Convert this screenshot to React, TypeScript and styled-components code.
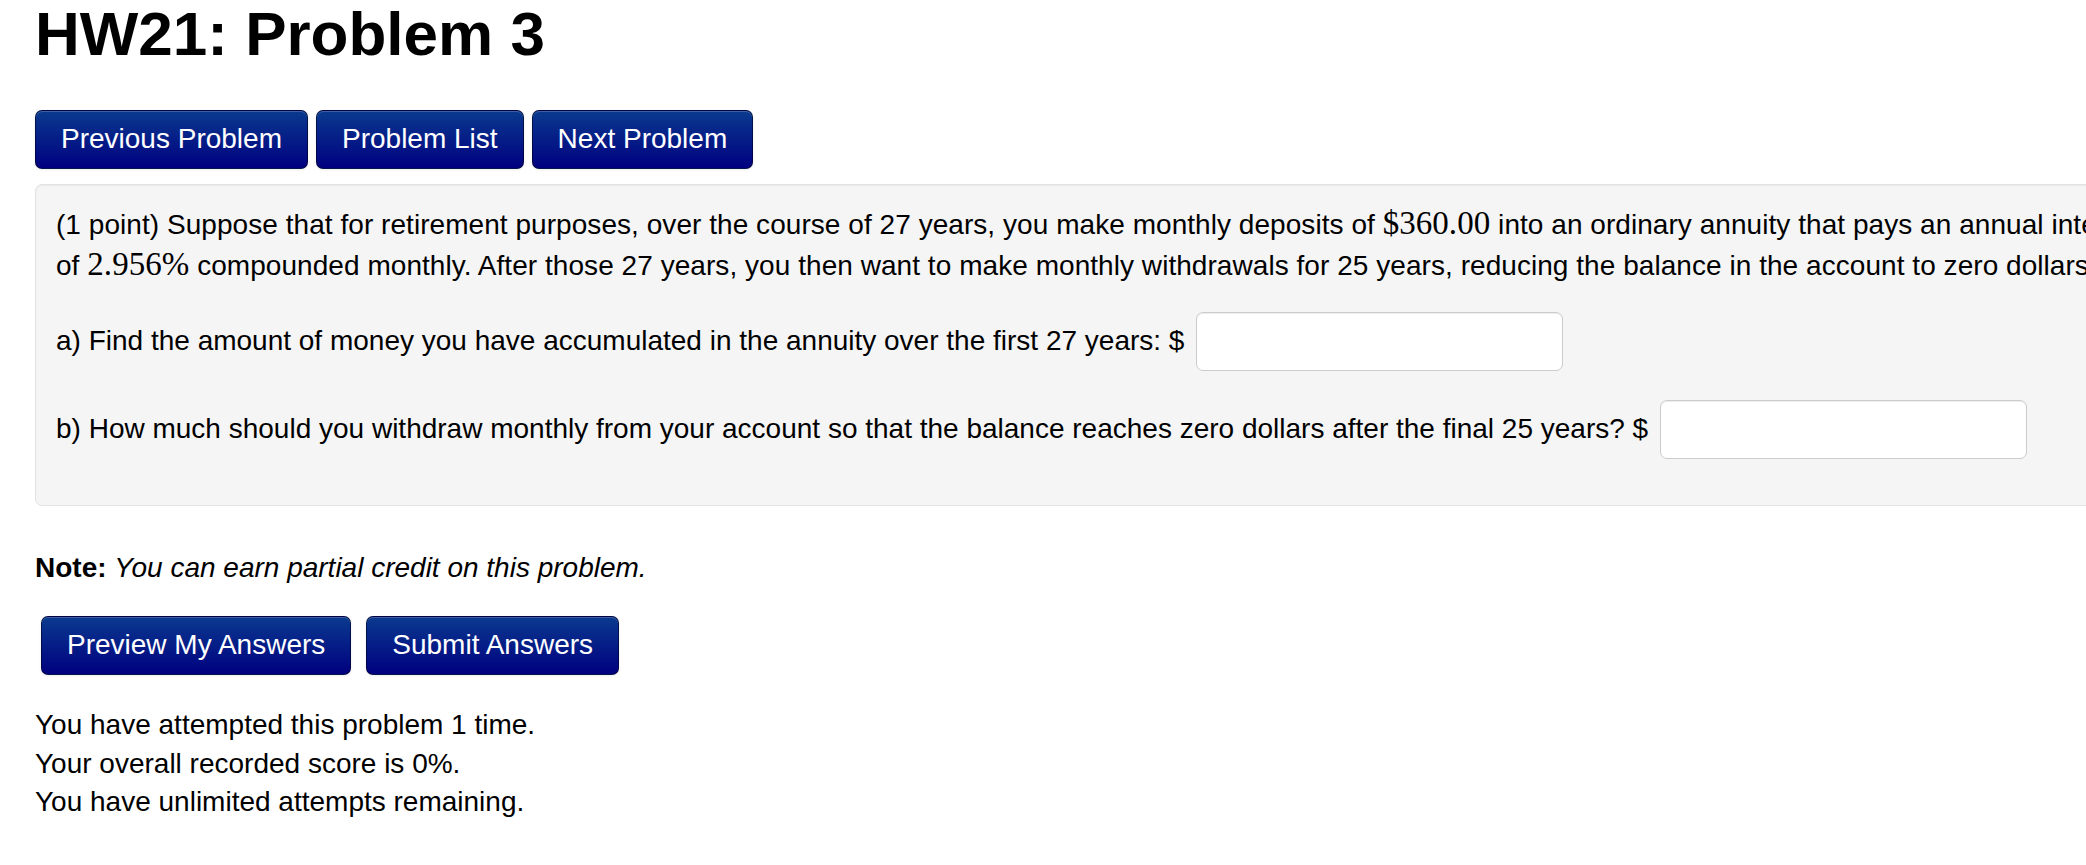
import styled, { createGlobalStyle } from "styled-components";

const GlobalStyle = createGlobalStyle`
  html, body {
    margin: 0;
    padding: 0;
    overflow-x: hidden;
    background: #fff;
  }
  body {
    font-family: "Liberation Sans", Arial, sans-serif;
    font-size: 28px;
    line-height: 38.5px;
    color: #000;
  }
`;

const Page = styled.div`
  padding: 0 0 40px 35px;
`;

const Title = styled.h1`
  margin: 0;
  font-size: 62px;
  line-height: 68px;
  font-weight: bold;
`;

const ButtonBar = styled.div<{ $top: number; $indent?: number }>`
  display: flex;
  gap: ${(p) => (p.$indent ? 15 : 8)}px;
  margin-top: ${(p) => p.$top}px;
  padding-left: ${(p) => p.$indent ?? 0}px;
`;

const NavButton = styled.button`
  font-family: "Liberation Sans", Arial, sans-serif;
  font-size: 28px;
  line-height: 38.5px;
  color: #fff;
  padding: 9.25px 25px;
  border: 1px solid rgba(0, 0, 30, 0.6);
  border-radius: 7px;
  background-image: linear-gradient(#0a3a8e, #000080);
  box-shadow: inset 0 1px 0 rgba(255, 255, 255, 0.2),
    0 1px 3px rgba(0, 0, 0, 0.08);
  cursor: pointer;
`;

const Well = styled.div`
  width: 2300px;
  margin-top: 15px;
  padding: 19px 20px 46px;
  background: #f5f5f5;
  border: 1px solid #e3e3e3;
  border-radius: 7px;
  box-shadow: inset 0 1px 1px rgba(0, 0, 0, 0.05);
`;

const TextLine = styled.div`
  white-space: nowrap;
  letter-spacing: 0.05px;
`;

const Math = styled.span`
  font-family: "Liberation Serif", "Times New Roman", serif;
  font-size: 33px;
`;

const AnswerRow = styled.div<{ $top: number }>`
  display: flex;
  align-items: center;
  margin-top: ${(p) => p.$top}px;
  white-space: pre;
`;

const AnswerInput = styled.input`
  box-sizing: border-box;
  width: 367px;
  height: 59px;
  margin-left: 12px;
  border: 1px solid #ccc;
  border-radius: 7px;
  background: #fff;
  box-shadow: inset 0 1px 1px rgba(0, 0, 0, 0.075);
  font-size: 28px;
`;

const Note = styled.div`
  margin-top: 43px;
  em {
    font-style: italic;
  }
`;

const Status = styled.div`
  margin-top: 31px;
`;

export default function App() {
  return (
    <>
      <GlobalStyle />
      <Page>
        <Title>HW21: Problem 3</Title>

        <ButtonBar $top={42}>
          <NavButton>Previous Problem</NavButton>
          <NavButton>Problem List</NavButton>
          <NavButton>Next Problem</NavButton>
        </ButtonBar>

        <Well>
          <TextLine>
            (1 point) Suppose that for retirement purposes, over the course of 27 years, you make
            monthly deposits of <Math>$360.00</Math> into an ordinary annuity that pays an annual
            interest rate
          </TextLine>
          <TextLine>
            of <Math>2.956%</Math> compounded monthly. After those 27 years, you then want to make
            monthly withdrawals for 25 years, reducing the balance in the account to zero dollars.
          </TextLine>

          <AnswerRow $top={27}>
            a) Find the amount of money you have accumulated in the annuity over the first 27 years: $
            <AnswerInput type="text" />
          </AnswerRow>
          <AnswerRow $top={29}>
            b) How much should you withdraw monthly from your account so that the balance reaches zero
            dollars after the final 25 years? $
            <AnswerInput type="text" />
          </AnswerRow>
        </Well>

        <Note>
          <b>Note:</b> <em>You can earn partial credit on this problem.</em>
        </Note>

        <ButtonBar $top={28.5} $indent={6}>
          <NavButton>Preview My Answers</NavButton>
          <NavButton>Submit Answers</NavButton>
        </ButtonBar>

        <Status>
          <div>You have attempted this problem 1 time.</div>
          <div>Your overall recorded score is 0%.</div>
          <div>You have unlimited attempts remaining.</div>
        </Status>
      </Page>
    </>
  );
}
